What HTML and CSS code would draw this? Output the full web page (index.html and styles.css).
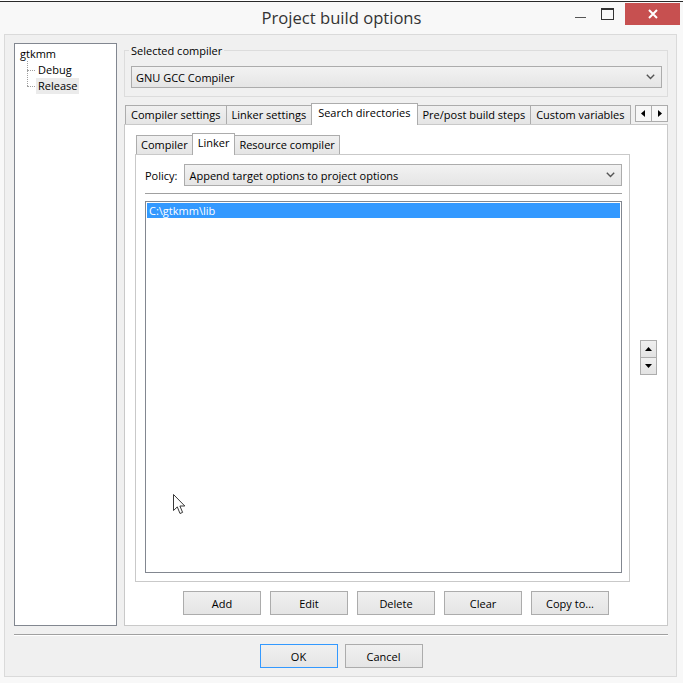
FILE: index.html
```html
<!DOCTYPE html>
<html>
<head>
<meta charset="utf-8">
<title>Project build options</title>
<link rel="stylesheet" href="styles.css">
</head>
<body>
<div class="topline"></div>
<div class="window">
  <div class="titlebar">
    <div class="title">Project build options</div>
    <div class="controls">
      <div class="ctl-min"></div>
      <div class="ctl-max"></div>
      <div class="ctl-close">
        <svg width="10" height="10" viewBox="0 0 10 10"><path d="M1 1 L9 9 M9 1 L1 9" stroke="#fff" stroke-width="2" fill="none"/></svg>
      </div>
    </div>
  </div>
  <div class="client">
    <div class="main">
      <div class="tree">
        <div class="node">gtkmm</div>
        <div class="children">
          <div class="node child"><span class="label">Debug</span></div>
          <div class="node child"><span class="label selected">Release</span></div>
        </div>
      </div>
      <div class="right">
        <fieldset class="group">
          <legend>Selected compiler</legend>
          <div class="combo"><span>GNU GCC Compiler</span>
            <svg class="chev" width="9" height="6" viewBox="0 0 9 6"><path d="M0.8 0.8 L4.5 4.5 L8.2 0.8" stroke="#555" stroke-width="1.4" fill="none"/></svg>
          </div>
        </fieldset>
        <div class="tabs">
          <div class="tabbar">
            <div class="tab">Compiler settings</div>
            <div class="tab">Linker settings</div>
            <div class="tab active">Search directories</div>
            <div class="tab">Pre/post build steps</div>
            <div class="tab">Custom variables</div>
            <div class="tabscroll">
              <div class="sbtn"><svg width="5" height="7" viewBox="0 0 5 7"><path d="M4 0 L0 3.5 L4 7 Z" fill="#000"/></svg></div>
              <div class="sbtn"><svg width="5" height="7" viewBox="0 0 5 7"><path d="M1 0 L5 3.5 L1 7 Z" fill="#000"/></svg></div>
            </div>
          </div>
          <div class="page">
            <div class="pagebody">
              <div class="subtabs">
                <div class="tabbar sub">
                  <div class="tab">Compiler</div>
                  <div class="tab active">Linker</div>
                  <div class="tab">Resource compiler</div>
                </div>
                <div class="subpage">
                  <div class="policy">
                    <span>Policy:</span>
                    <div class="combo"><span>Append target options to project options</span>
                      <svg class="chev" width="9" height="6" viewBox="0 0 9 6"><path d="M0.8 0.8 L4.5 4.5 L8.2 0.8" stroke="#555" stroke-width="1.4" fill="none"/></svg>
                    </div>
                  </div>
                  <div class="hsep"></div>
                  <div class="list">
                    <div class="item selected">C:\gtkmm\lib</div>
                  </div>
                </div>
              </div>
              <div class="side">
                <div class="arrowbtn"><svg width="7" height="4" viewBox="0 0 7 4"><path d="M0 4 L3.5 0 L7 4 Z" fill="#000"/></svg></div>
                <div class="arrowbtn"><svg width="7" height="4" viewBox="0 0 7 4"><path d="M0 0 L3.5 4 L7 0 Z" fill="#000"/></svg></div>
              </div>
            </div>
            <div class="actions">
              <div class="btn">Add</div>
              <div class="btn">Edit</div>
              <div class="btn">Delete</div>
              <div class="btn">Clear</div>
              <div class="btn">Copy to...</div>
            </div>
          </div>
        </div>
      </div>
    </div>
    <div class="dlgsep"></div>
    <div class="dlgbtns">
      <div class="btn default">OK</div>
      <div class="btn">Cancel</div>
    </div>
  </div>
</div>
<svg class="cursor" width="14" height="22" viewBox="0 0 14 22"><path d="M0.5 0.5 L0.5 16.5 L4.3 12.9 L7 19.5 L9.6 18.4 L6.9 12 L11.8 12 Z" fill="#fff" stroke="#222" stroke-width="0.9" stroke-linejoin="miter"/></svg>
</body>
</html>
```

FILE: styles.css
```css
* { box-sizing: border-box; }

body {
  margin: 0;
  width: 683px;
  height: 683px;
  overflow: hidden;
  position: relative;
  background: #fff;
  font-family: "Open Sans", "Noto Sans", sans-serif;
  font-size: 11px;
  color: #000;
}

.topline {
  height: 2px;
  background: #fff;
  border-bottom: 1px solid #2a2a2a;
}

.window {
  height: 681px;
  background: #f8f8f8;
  display: flex;
  flex-direction: column;
}

.titlebar {
  height: 32px;
  flex: none;
  display: grid;
  grid-template-columns: 1fr auto 1fr;
  align-items: start;
}

.title {
  grid-column: 2;
  font-size: 16.6px;
  line-height: 32px;
  color: #333;
}

.controls {
  grid-column: 3;
  justify-self: end;
  display: flex;
  align-items: flex-start;
  padding-right: 3px;
}

.ctl-min {
  width: 11px;
  height: 1px;
  background: #555;
  margin-top: 15px;
  margin-right: 15px;
}

.ctl-max {
  width: 13px;
  height: 12px;
  border: 1px solid #333;
  border-top-width: 2px;
  margin-top: 6px;
  margin-right: 11px;
}

.ctl-close {
  width: 55px;
  height: 22px;
  margin-top: 1px;
  background: #c75050;
  display: flex;
  align-items: center;
  justify-content: center;
}

.client {
  flex: 1;
  margin: 0 6px 6px 4px;
  background: #f0f0f0;
  border: 1px solid #dadada;
  padding: 8px 8px 8px 9px;
  display: flex;
  flex-direction: column;
}

.main {
  display: flex;
  gap: 7px;
  height: 583px;
  flex: none;
}

/* tree */
.tree {
  width: 103px;
  flex: none;
  border: 1px solid #828790;
  background: #fff;
  padding: 2px 0 0 5px;
}

.node {
  height: 16px;
  line-height: 16px;
  white-space: nowrap;
}

.children {
  position: relative;
}

.children::before {
  content: "";
  position: absolute;
  left: 7px;
  top: -1px;
  height: 25px;
  border-left: 1px dotted #a0a0a0;
}

.child {
  position: relative;
  padding-left: 16px;
}

.child::before {
  content: "";
  position: absolute;
  left: 7px;
  top: 8px;
  width: 8px;
  border-top: 1px dotted #a0a0a0;
}

.label {
  display: inline-block;
  padding: 0 2px;
}

.label.selected {
  background: #ebebeb;
}

/* right column */
.right {
  flex: 1;
  display: flex;
  flex-direction: column;
  min-width: 0;
}

.group {
  margin: 0;
  border: 1px solid #dcdcdc;
  padding: 8px 5px 8px 6px;
  min-width: 0;
  flex: none;
}

.group legend {
  padding: 0 2px;
  margin-left: -2px;
  line-height: 15px;
  color: #000;
}

.combo {
  height: 22px;
  border: 1px solid #acacac;
  background: linear-gradient(#f2f2f2, #e5e5e5);
  display: flex;
  align-items: center;
  justify-content: space-between;
  padding: 0 6px 0 4px;
  white-space: nowrap;
}

.chev { flex: none; }

.tabs {
  margin-top: 6px;
  flex: 1;
  display: flex;
  flex-direction: column;
}

.tabbar {
  height: 21px;
  flex: none;
  display: flex;
  align-items: flex-end;
  padding-left: 1px;
}

.tab {
  height: 19px;
  line-height: 18px;
  padding: 0 5px;
  border: 1px solid #acacac;
  border-bottom: none;
  margin-right: -1px;
  background: linear-gradient(#f0f0f0, #e5e5e5);
  white-space: nowrap;
}

.tab.active {
  position: relative;
  z-index: 1;
  height: 22px;
  margin-bottom: -1px;
  line-height: 18px;
  background: #fff;
  padding: 0 6px;
}

.tabbar.sub .tab {
  padding: 0 4px;
}

.tabbar.sub .tab.active {
  padding: 0 5px;
}

.tabscroll {
  margin-left: auto;
  align-self: flex-start;
  margin-top: 2px;
  display: flex;
}

.sbtn {
  width: 17px;
  height: 17px;
  border: 1px solid #acacac;
  background: #f7f7f7;
  display: flex;
  align-items: center;
  justify-content: center;
  margin-left: -1px;
}

.page {
  flex: 1;
  border: 1px solid #c9c9c9;
  background: #fff;
  display: flex;
  flex-direction: column;
}

.pagebody {
  flex: 1;
  display: flex;
  padding: 8px 0 0 10px;
}

.subtabs {
  flex: 1;
  display: flex;
  flex-direction: column;
}

.subpage {
  flex: 1;
  border: 1px solid #c9c9c9;
  background: #fff;
  padding: 9px 7px 8px 9px;
  display: flex;
  flex-direction: column;
}

.policy {
  display: flex;
  align-items: center;
  gap: 7px;
}

.policy .combo { flex: 1; }

.hsep {
  margin-top: 7px;
  border-top: 1px solid #a0a0a0;
  border-bottom: 1px solid #fff;
}

.list {
  margin-top: 6px;
  flex: 1;
  border: 1px solid #828790;
  padding: 1px;
}

.item {
  height: 15px;
  line-height: 15px;
  padding-left: 2px;
}

.item.selected {
  background: #3399ff;
  color: #fff;
}

.side {
  width: 37px;
  flex: none;
  display: flex;
  flex-direction: column;
  justify-content: center;
  align-items: center;
}

.arrowbtn {
  width: 17px;
  height: 18px;
  border: 1px solid #adadad;
  background: linear-gradient(#f0f0f0, #e3e3e3);
  display: flex;
  align-items: center;
  justify-content: center;
}

.arrowbtn + .arrowbtn { margin-top: -1px; }

.actions {
  display: flex;
  justify-content: center;
  gap: 9px;
  padding: 9px 0 10px;
}

.btn {
  width: 78px;
  height: 24px;
  border: 1px solid #acacac;
  background: linear-gradient(#f0f0f0, #e5e5e5);
  display: flex;
  align-items: center;
  justify-content: center;
}

.btn.default {
  border-color: #3399ff;
}

.dlgsep {
  margin-top: 8px;
  border-top: 1px solid #a0a0a0;
  border-bottom: 1px solid #fff;
}

.dlgbtns {
  margin-top: 8px;
  display: flex;
  justify-content: center;
  gap: 7px;
}

.cursor {
  position: absolute;
  left: 173px;
  top: 494px;
}
```
